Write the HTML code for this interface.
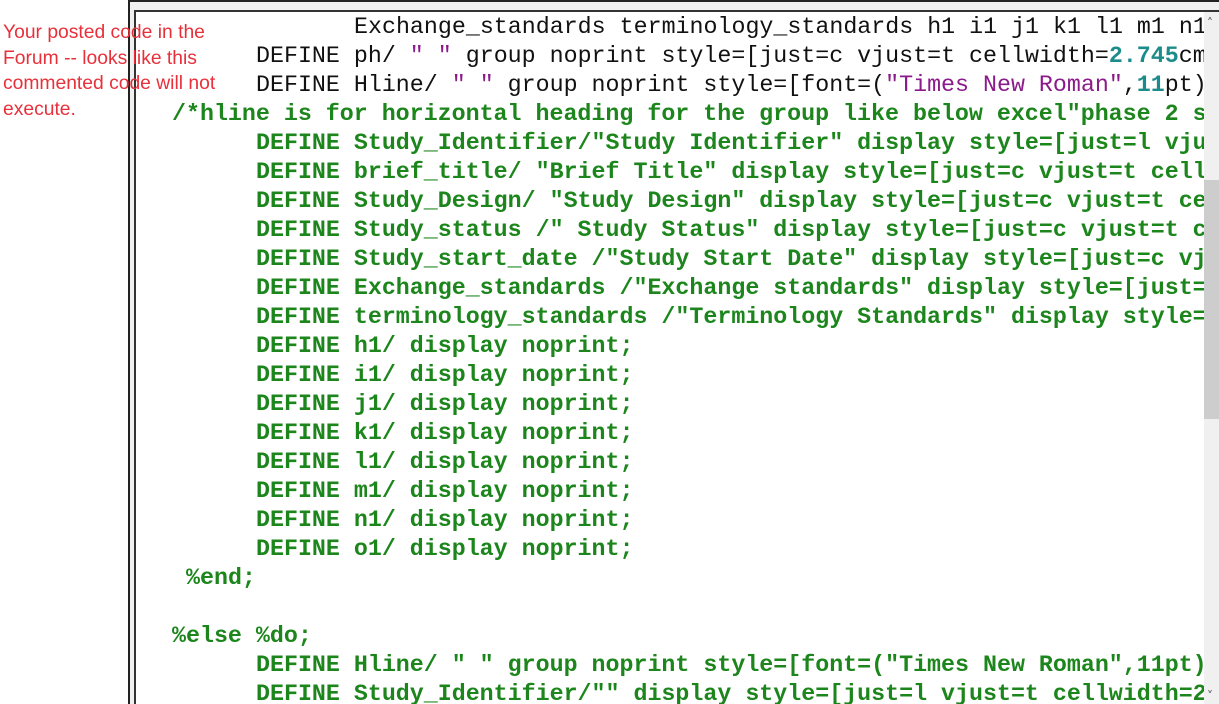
<!DOCTYPE html>
<html><head><meta charset="utf-8"><style>
html,body{margin:0;padding:0;background:#fff;width:1219px;height:704px;overflow:hidden;position:relative}
.note{position:absolute;left:3px;top:20px;color:#e8303a;font:19.3px/25.5px "Liberation Sans",sans-serif;width:240px;z-index:2}
.frame{position:absolute;left:128px;top:0;width:1089px;height:720px;border:2px solid #222;border-right:2px solid #111;background:#f0f0f0}
.inner{position:absolute;left:4px;top:8px;right:0;bottom:0;border-left:2px solid #333;border-top:2px solid #333;background:#fff;overflow:hidden}
.code{position:absolute;left:32px;top:-1px;font-family:"Liberation Mono",monospace;font-size:23.3px;line-height:29px;white-space:pre;color:#111}
.l{position:absolute;white-space:pre}
.g{color:#1c861c;font-weight:bold}
.p{color:#8b1a8b}
.t{color:#1e8b8b;font-weight:bold}
.sb{position:absolute;right:0;top:0;width:15px;bottom:0;background:#f0f0f0;z-index:3}
.thumb{position:absolute;left:0;width:15px;top:168px;height:239px;background:#cdcdcd}
</style></head><body>
<div class="note">Your posted code in the Forum -- looks like this commented code will not execute.</div>
<div class="frame"><div class="inner">
<div class="code">
<div class="l" style="left:186px;top:2px">Exchange_standards terminology_standards h1 i1 j1 k1 l1 m1 n1</div>
<div class="l" style="left:88px;top:31px">DEFINE ph/ <span class="p">" "</span> group noprint style=[just=c vjust=t cellwidth=<span class="t">2.745</span>cm</div>
<div class="l" style="left:88px;top:60px">DEFINE Hline/ <span class="p">" "</span> group noprint style=[font=(<span class="p">"Times New Roman"</span>,<span class="t">11</span>pt)</div>
<div class="l g" style="left:4px;top:89px">/*hline is for horizontal heading for the group like below excel"phase 2 s</div>
<div class="l g" style="left:88px;top:118px">DEFINE Study_Identifier/"Study Identifier" display style=[just=l vjust</div>
<div class="l g" style="left:88px;top:147px">DEFINE brief_title/ "Brief Title" display style=[just=c vjust=t cell</div>
<div class="l g" style="left:88px;top:176px">DEFINE Study_Design/ "Study Design" display style=[just=c vjust=t ce</div>
<div class="l g" style="left:88px;top:205px">DEFINE Study_status /" Study Status" display style=[just=c vjust=t c</div>
<div class="l g" style="left:88px;top:234px">DEFINE Study_start_date /"Study Start Date" display style=[just=c vj</div>
<div class="l g" style="left:88px;top:263px">DEFINE Exchange_standards /"Exchange standards" display style=[just=</div>
<div class="l g" style="left:88px;top:292px">DEFINE terminology_standards /"Terminology Standards" display style=</div>
<div class="l g" style="left:88px;top:321px">DEFINE h1/ display noprint;</div>
<div class="l g" style="left:88px;top:350px">DEFINE i1/ display noprint;</div>
<div class="l g" style="left:88px;top:379px">DEFINE j1/ display noprint;</div>
<div class="l g" style="left:88px;top:408px">DEFINE k1/ display noprint;</div>
<div class="l g" style="left:88px;top:437px">DEFINE l1/ display noprint;</div>
<div class="l g" style="left:88px;top:466px">DEFINE m1/ display noprint;</div>
<div class="l g" style="left:88px;top:495px">DEFINE n1/ display noprint;</div>
<div class="l g" style="left:88px;top:524px">DEFINE o1/ display noprint;</div>
<div class="l g" style="left:18px;top:553px">%end;</div>
<div class="l g" style="left:4px;top:611px">%else %do;</div>
<div class="l g" style="left:88px;top:640px">DEFINE Hline/ " " group noprint style=[font=("Times New Roman",11pt)</div>
<div class="l g" style="left:88px;top:669px">DEFINE Study_Identifier/"" display style=[just=l vjust=t cellwidth=2</div>
</div>
<div class="sb"><div style="position:absolute;top:4px;left:3px;font:12px 'DejaVu Sans';color:#555">˄</div><div class="thumb"></div><div style="position:absolute;top:677px;left:3px;font:12px 'DejaVu Sans';color:#555">˅</div></div>
</div></div>
</body></html>
